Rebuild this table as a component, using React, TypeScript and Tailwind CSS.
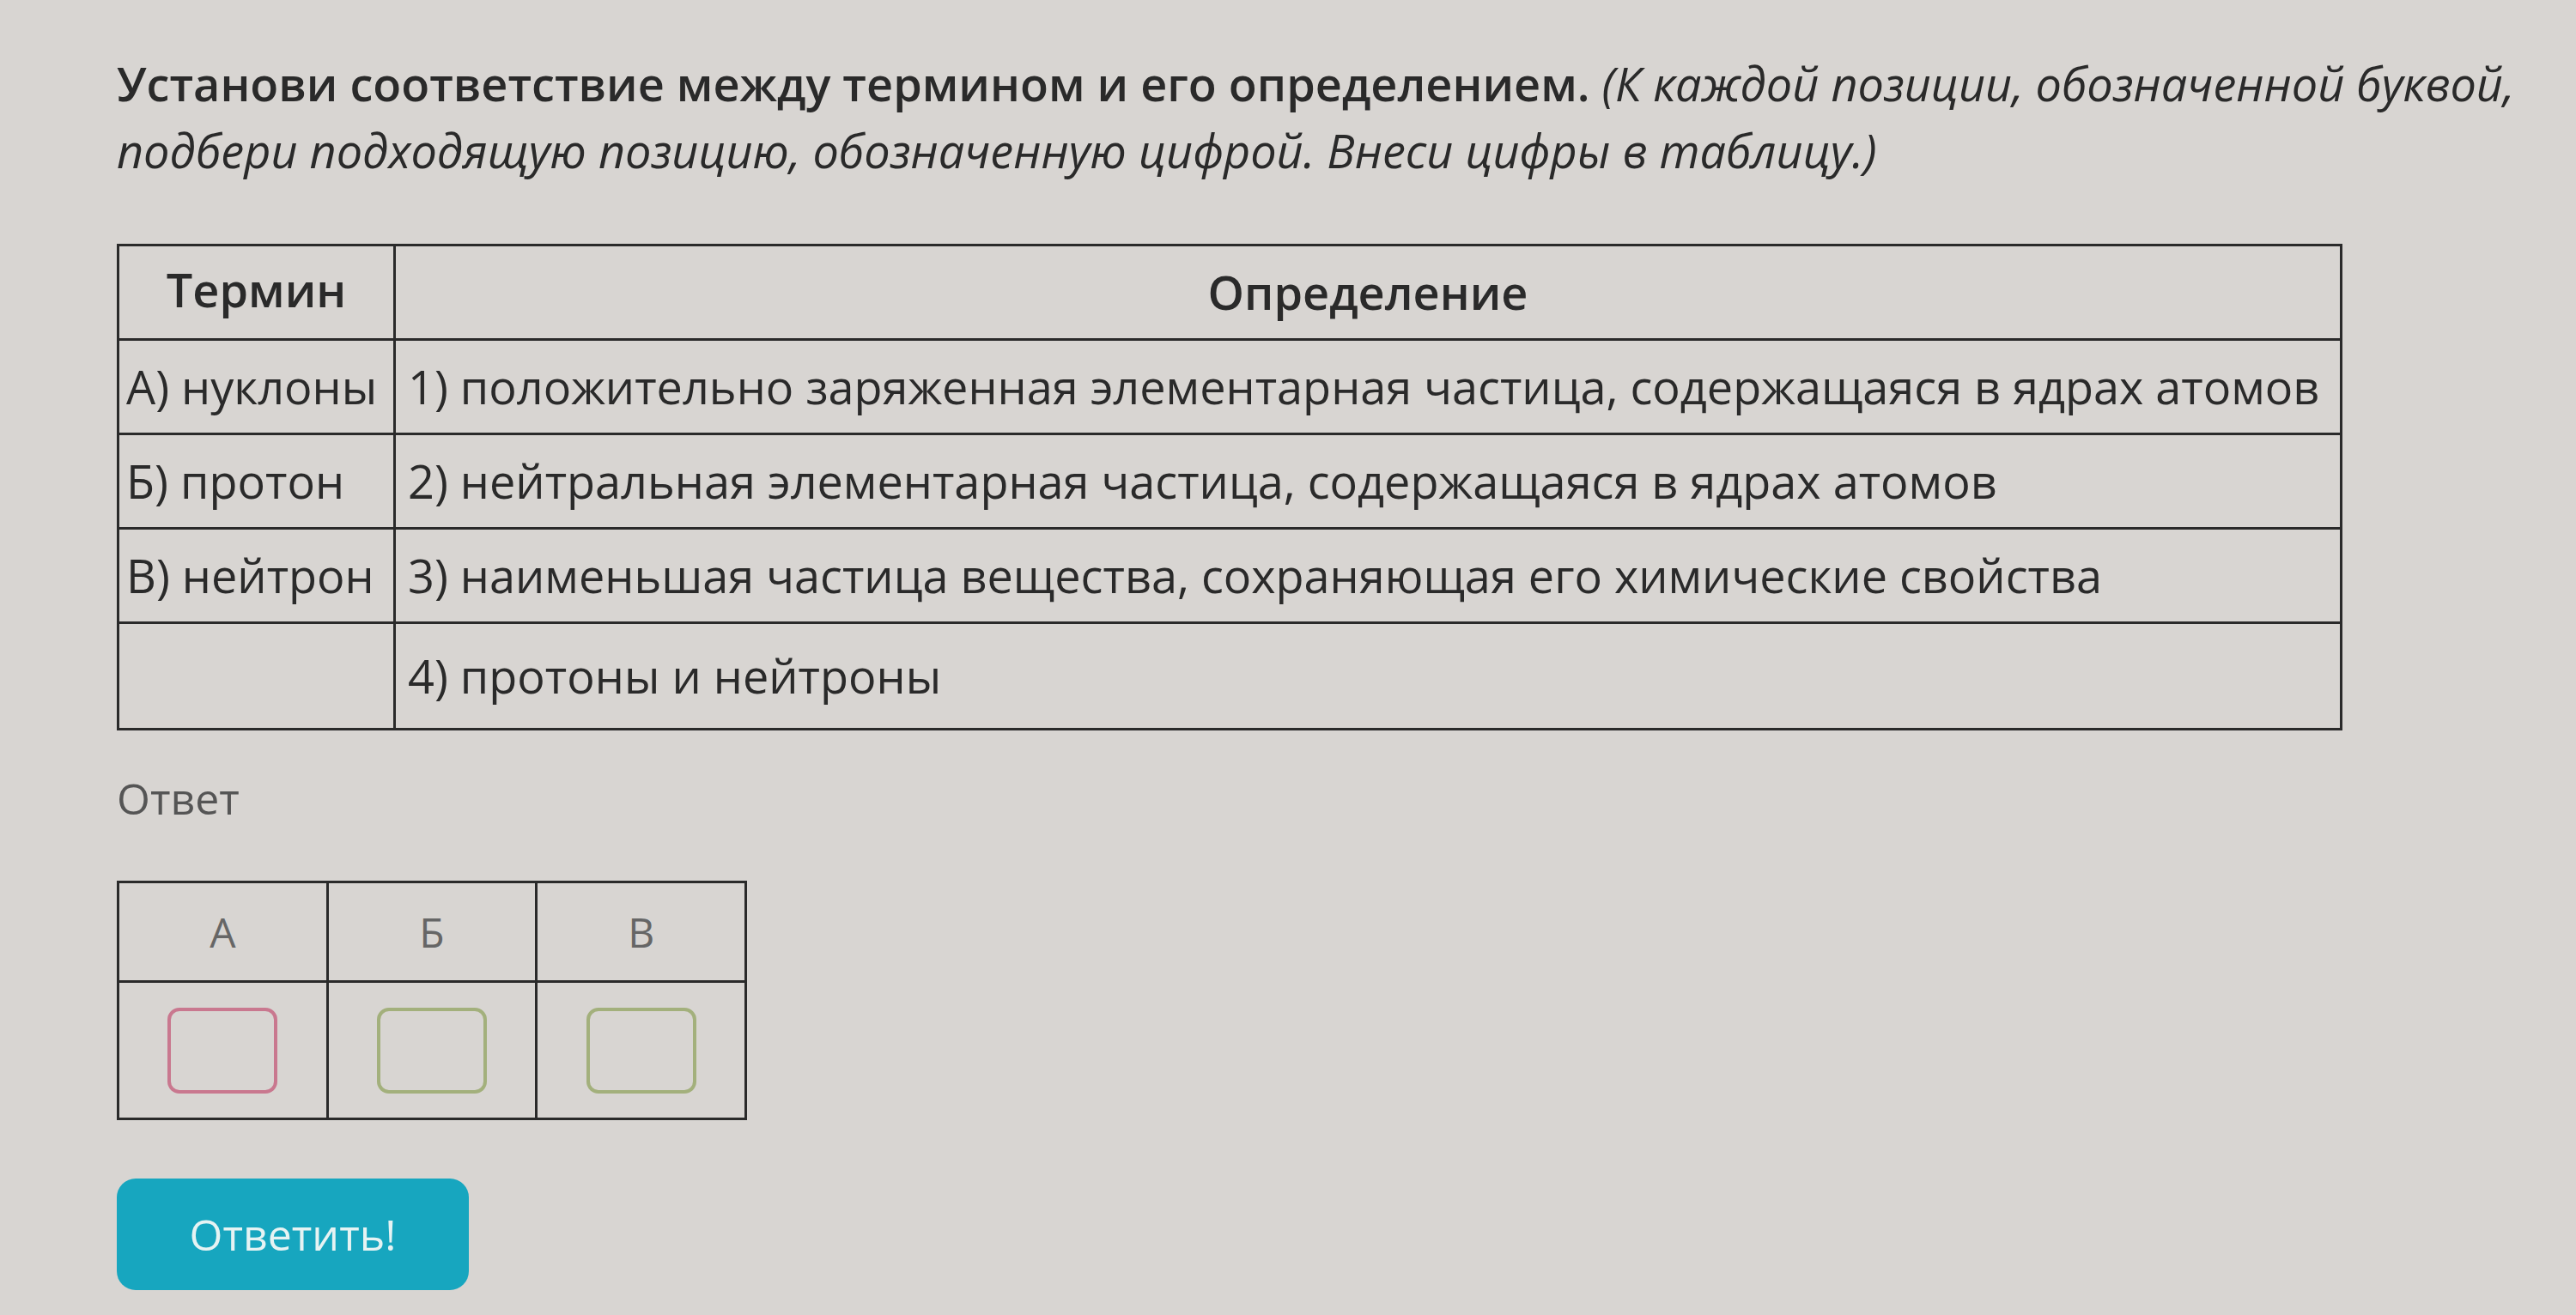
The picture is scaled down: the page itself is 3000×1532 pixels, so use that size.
const terms = [
  { term: 'А) нуклоны', def: '1) положительно заряженная элементарная частица, содержащаяся в ядрах атомов' },
  { term: 'Б) протон', def: '2) нейтральная элементарная частица, содержащаяся в ядрах атомов' },
  { term: 'В) нейтрон', def: '3) наименьшая частица вещества, сохраняющая его химические свойства' },
  { term: '', def: '4) протоны и нейтроны' },
]

const boxes = [
  { letter: 'А', border: 'border-[#c9788f]' },
  { letter: 'Б', border: 'border-[#a3b07c]' },
  { letter: 'В', border: 'border-[#a3b07c]' },
]

const App = () => {
  return (
    <div className="min-h-[1532px] w-[3000px] bg-[#d8d5d2] pl-[136px] pt-[58px] text-[#2a2a2a] font-['Open_Sans',sans-serif]">
      <p className="text-[54px] leading-[78px] whitespace-nowrap">
        <b className="font-semibold">Установи соответствие между термином и его определением.</b>{' '}
        <i>(К каждой позиции, обозначенной буквой,</i>
        <br />
        <i>подбери подходящую позицию, обозначенную цифрой. Внеси цифры в таблицу.)</i>
      </p>

      <table className="mt-[70px] w-[2592px] border-collapse border-[3px] border-[#2a2a2a] text-[54px]">
        <thead>
          <tr className="h-[110px]">
            <th className="w-[322px] border-[3px] border-[#2a2a2a] font-semibold align-top pt-[10px]">Термин</th>
            <th className="border-[3px] border-[#2a2a2a] font-semibold">Определение</th>
          </tr>
        </thead>
        <tbody>
          {terms.map((r, i) => (
            <tr key={i} className={i === 3 ? 'h-[124px]' : 'h-[110px]'}>
              <td className="border-[3px] border-[#2a2a2a] pl-[8px] whitespace-nowrap">{r.term}</td>
              <td className="border-[3px] border-[#2a2a2a] pl-[14px] whitespace-nowrap">{r.def}</td>
            </tr>
          ))}
        </tbody>
      </table>

      <div className="mt-[42px] text-[50px] text-[#555]">Ответ</div>

      <table className="mt-[58px] w-[734px] border-collapse border-[3px] border-[#2a2a2a]">
        <tbody>
          <tr className="h-[116px]">
            {boxes.map(b => (
              <td key={b.letter} className="w-[245px] border-[3px] border-[#2a2a2a] text-center text-[48px] text-[#666]">
                {b.letter}
              </td>
            ))}
          </tr>
          <tr className="h-[160px]">
            {boxes.map(b => (
              <td key={b.letter} className="border-[3px] border-[#2a2a2a]">
                <div className={`mx-auto h-[100px] w-[128px] rounded-[14px] border-[4px] ${b.border}`} />
              </td>
            ))}
          </tr>
        </tbody>
      </table>

      <button className="mt-[68px] flex h-[130px] w-[410px] items-center justify-center rounded-[22px] bg-[#17a6bf] text-[50px] text-[#e6f3f3]">
        Ответить!
      </button>
    </div>
  )
}

export default App
